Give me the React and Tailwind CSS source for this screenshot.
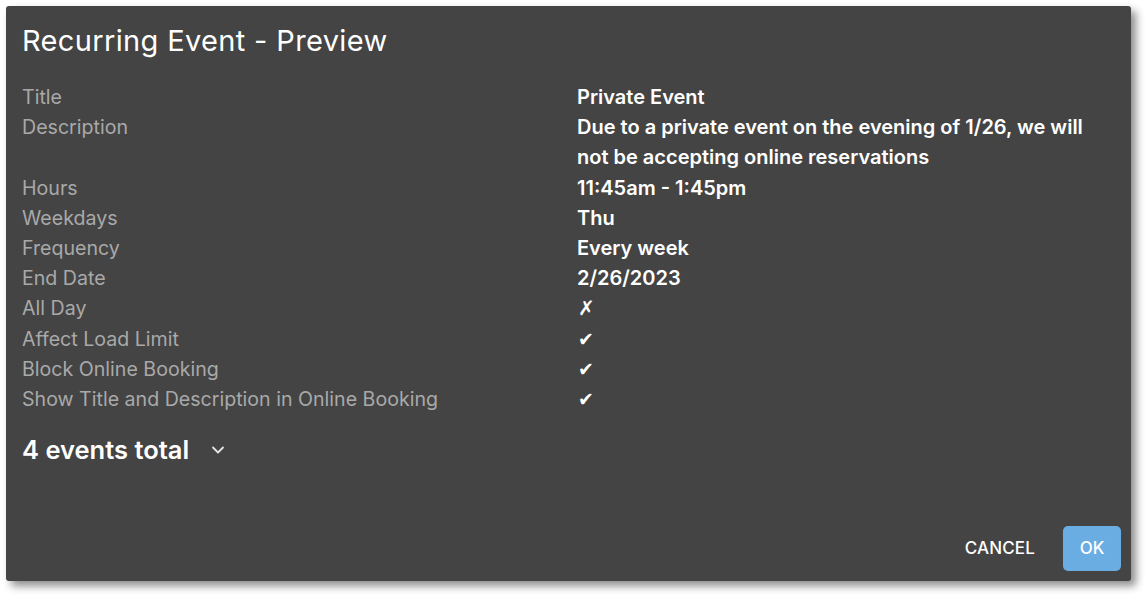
const rows = [
  { label: 'Title', value: 'Private Event' },
  { label: 'Description', value: 'Due to a private event on the evening of 1/26, we will not be accepting online reservations' },
  { label: 'Hours', value: '11:45am - 1:45pm' },
  { label: 'Weekdays', value: 'Thu' },
  { label: 'Frequency', value: 'Every week' },
  { label: 'End Date', value: '2/26/2023' },
  { label: 'All Day', value: '\u2717', mark: 'x' },
  { label: 'Affect Load Limit', value: '\u2714', mark: 'check' },
  { label: 'Block Online Booking', value: '\u2714', mark: 'check' },
  { label: 'Show Title and Description in Online Booking', value: '\u2714', mark: 'check' },
]

export default function App() {
  return (
    <div className="w-[1145px] h-[595px] bg-white pt-[6px] pl-[6px]" style={{ fontFamily: 'Inter, "Noto Sans", sans-serif' }}>
      <div className="w-[1125px] h-[575px] bg-[#444444] rounded-[3px] shadow-[5px_5px_8px_rgba(0,0,0,0.45)] flex flex-col justify-between">
        <div className="pl-[16px] pr-[16px] pt-[17px]">
          <h1 className="text-[29px] leading-[36px] tracking-[0.012em] text-white">Recurring Event - Preview</h1>
          <div className="mt-[23px] grid grid-cols-[555px_520px]">
            {rows.map((r) => (
              <div key={r.label} className="contents">
                <div className="text-[19.6px] leading-[30.2px] text-[#a9a9a9]">{r.label}</div>
                {r.mark === 'x' && (
                  <div className="text-[20px] leading-[30.2px] font-bold text-white pl-[1px]" style={{ fontFamily: '"DejaVu Sans", sans-serif' }}>{r.value}</div>
                )}
                {r.mark === 'check' && (
                  <div className="text-[19px] leading-[30.2px] text-white pl-[1px]" style={{ fontFamily: '"DejaVu Sans", sans-serif' }}>{r.value}</div>
                )}
                {!r.mark && (
                  <div className="text-[20px] leading-[30.2px] font-semibold text-white">{r.value}</div>
                )}
              </div>
            ))}
          </div>
          <div className="mt-[20px] flex items-center gap-[22px]">
            <span className="text-[25.5px] leading-[32px] font-semibold text-white">4 events total</span>
            <svg width="14" height="10" viewBox="0 0 14 10" fill="none">
              <path d="M2 2.5l5 5 5-5" stroke="#e5e5e5" strokeWidth="1.8" strokeLinecap="round" strokeLinejoin="round" />
            </svg>
          </div>
        </div>
        <div className="flex items-center justify-end gap-[14px] pr-[10px] pb-[10px]">
          <button type="button" className="h-[45px] px-[14px] text-[17px] font-medium tracking-[0.01em] text-white">CANCEL</button>
          <button type="button" className="h-[45px] w-[58px] rounded-[5px] bg-[#6aade3] text-[17px] font-medium text-white">OK</button>
        </div>
      </div>
    </div>
  )
}
